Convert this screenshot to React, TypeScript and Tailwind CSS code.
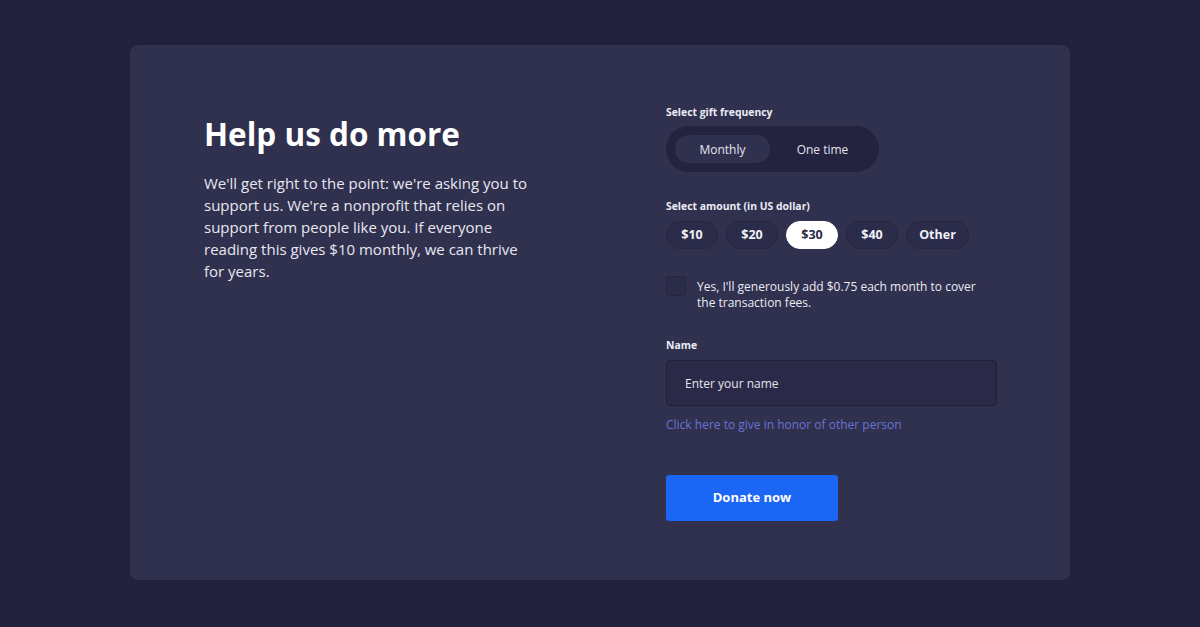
import React, { useState } from "react";

export default function App() {
  const [freq, setFreq] = useState("Monthly");
  const [amount, setAmount] = useState("$30");
  const amounts = ["$10", "$20", "$30", "$40", "Other"];
  return (
    <div
      className="w-full min-h-[627px] bg-[#22223c] pt-[45px] pb-[47px] flex justify-center"
      style={{ fontFamily: '"Open Sans", "Noto Sans", sans-serif' }}
    >
      <div className="w-[940px] h-[535px] bg-[#30304f] rounded-[8px] flex pl-[74px] pt-[59px]">
        <div className="w-[462px] pt-[10px]">
          <h1 className="text-[31.5px] leading-[40px] font-bold text-white">
            Help us do more
          </h1>
          <p className="mt-[18px] w-[330px] text-[15px] leading-[22px] text-[#e8e8f0]">
            We'll get right to the point: we're asking you to support us. We're a nonprofit that relies on support from people like you. If everyone reading this gives $10 monthly, we can thrive for years.
          </p>
        </div>
        <div className="flex flex-col items-start">
          <div className="text-[10.4px] leading-[16px] font-bold text-[#ececf4]">
            Select gift frequency
          </div>
          <div className="mt-[6px] h-[46px] w-[213px] rounded-full bg-[#23233f] p-[9px] flex gap-[5px]">
            {["Monthly", "One time"].map((f) => (
              <button
                key={f}
                onClick={() => setFreq(f)}
                className={
                  "w-[95px] h-[28px] pt-[1px] rounded-full text-[12px] text-[#e4e4ee] " +
                  (freq === f ? "bg-[#30304f]" : "bg-transparent")
                }
              >
                {f}
              </button>
            ))}
          </div>
          <div className="mt-[26px] text-[10.4px] leading-[16px] font-bold text-[#ececf4]">
            Select amount (in US dollar)
          </div>
          <div className="mt-[7px] flex gap-[8px]">
            {amounts.map((a) => (
              <button
                key={a}
                onClick={() => setAmount(a)}
                className={
                  "h-[28px] pt-[1px] rounded-full text-[12.5px] font-bold border " +
                  (a === "Other" ? "w-[63px] " : "w-[52px] ") +
                  (amount === a
                    ? "bg-white text-[#2a2a48] border-white"
                    : "bg-[#2b2b4a] text-[#f0f0f6] border-[#272744]")
                }
              >
                {a}
              </button>
            ))}
          </div>
          <div className="mt-[27px] flex items-start gap-[11px]">
            <div className="w-[20px] h-[20px] shrink-0 rounded-[3px] bg-[#2b2b4a] border border-[#262642]" />
            <div className="mt-[3px] w-[300px] text-[12px] leading-[16px] text-[#ececf4]">
              Yes, I'll generously add $0.75 each month to cover the transaction fees.
            </div>
          </div>
          <div className="mt-[26px] text-[10.4px] leading-[16px] font-bold text-[#ececf4]">
            Name
          </div>
          <input
            className="mt-[7px] h-[46px] w-[331px] rounded-[4px] bg-[#2a2a48] border border-[#1f1f38] px-[18px] text-[12px] text-[#e8e8f0] placeholder:text-[#e4e4ee] outline-none"
            placeholder="Enter your name"
          />
          <a className="mt-[10px] text-[12px] leading-[18px] text-[#6a72d4] cursor-pointer">
            Click here to give in honor of other person
          </a>
          <button className="mt-[41px] h-[46px] w-[172px] rounded-[3px] bg-[#1b66f5] text-white text-[13px] font-bold">
            Donate now
          </button>
        </div>
      </div>
    </div>
  );
}
